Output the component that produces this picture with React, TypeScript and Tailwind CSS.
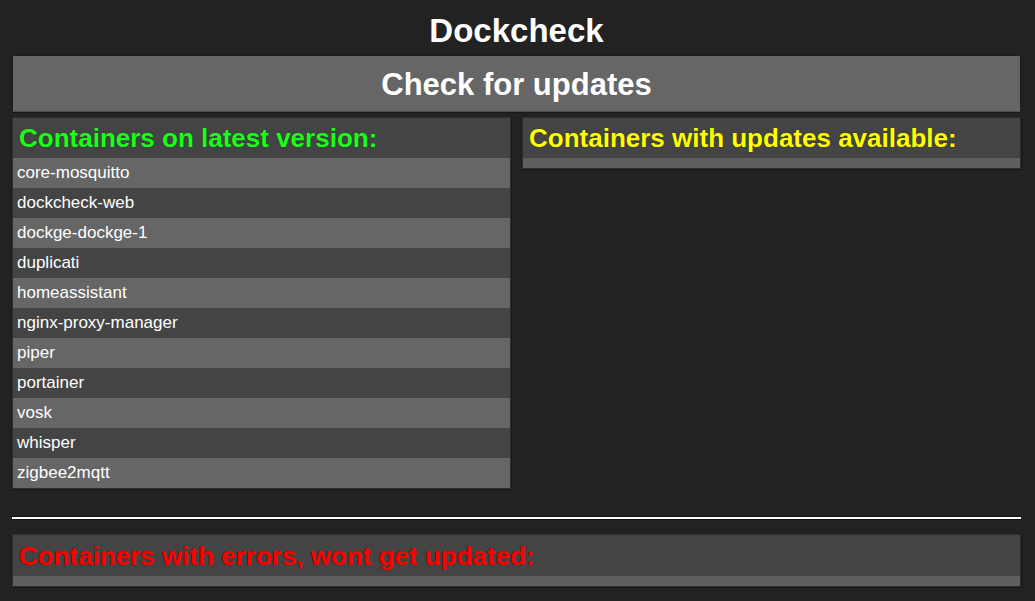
const UP_TO_DATE = [
  'core-mosquitto',
  'dockcheck-web',
  'dockge-dockge-1',
  'duplicati',
  'homeassistant',
  'nginx-proxy-manager',
  'piper',
  'portainer',
  'vosk',
  'whisper',
  'zigbee2mqtt',
];

const HEADING =
  "h-[40px] flex items-center pl-[6px] text-[26px] font-bold bg-[#444] [text-shadow:0_0_1px_rgba(0,0,0,0.6)]";

export default function App() {
  return (
    <div className="min-h-screen bg-[#222] pl-[12px] pr-[14px] pb-[14px] text-white font-['Liberation_Sans',Arial,sans-serif]">
      <h1 className="h-[55px] pt-[7px] flex items-center justify-center text-[33px] font-bold">
        Dockcheck
      </h1>

      <button
        type="button"
        className="w-full h-[57px] pt-[3px] flex items-center justify-center bg-[#666] text-[31px] font-bold text-white border border-[#1c1c1c] border-b-[#4e4e4e] shadow-[0_1px_0_#1a1a1a]"
      >
        Check for updates
      </button>

      <div className="mt-[5px] grid grid-cols-2 gap-[11px] items-start">
        <section className="border border-[#2e2e2e] shadow-[1px_1px_1px_#1a1a1a]">
          <h2 className={`${HEADING} text-[#1aff1a]`}>Containers on latest version:</h2>
          <ul>
            {UP_TO_DATE.map((name, i) => (
              <li
                key={name}
                className={`h-[30px] flex items-center pl-[4px] text-[17px] ${
                  i % 2 === 0 ? 'bg-[#666]' : 'bg-[#444]'
                }`}
              >
                {name}
              </li>
            ))}
          </ul>
        </section>

        <section className="border border-[#2e2e2e] shadow-[1px_1px_1px_#1a1a1a]">
          <h2 className={`${HEADING} text-[#ffff00]`}>Containers with updates available:</h2>
          <div className="h-[10px] bg-[#5f5f5f]" />
        </section>
      </div>

      <hr className="mt-[28px] h-[2px] border-0 bg-white shadow-[0_-1px_0_#111,0_1px_0_#111]" />

      <section className="mt-[15px] border border-[#2e2e2e] shadow-[1px_1px_1px_#1a1a1a]">
        <h2 className={`${HEADING} h-[41px] pt-[2px] text-[#ff0000]`}>
          Containers with errors, wont get updated:
        </h2>
        <div className="h-[10px] bg-[#5f5f5f]" />
      </section>
    </div>
  );
}
